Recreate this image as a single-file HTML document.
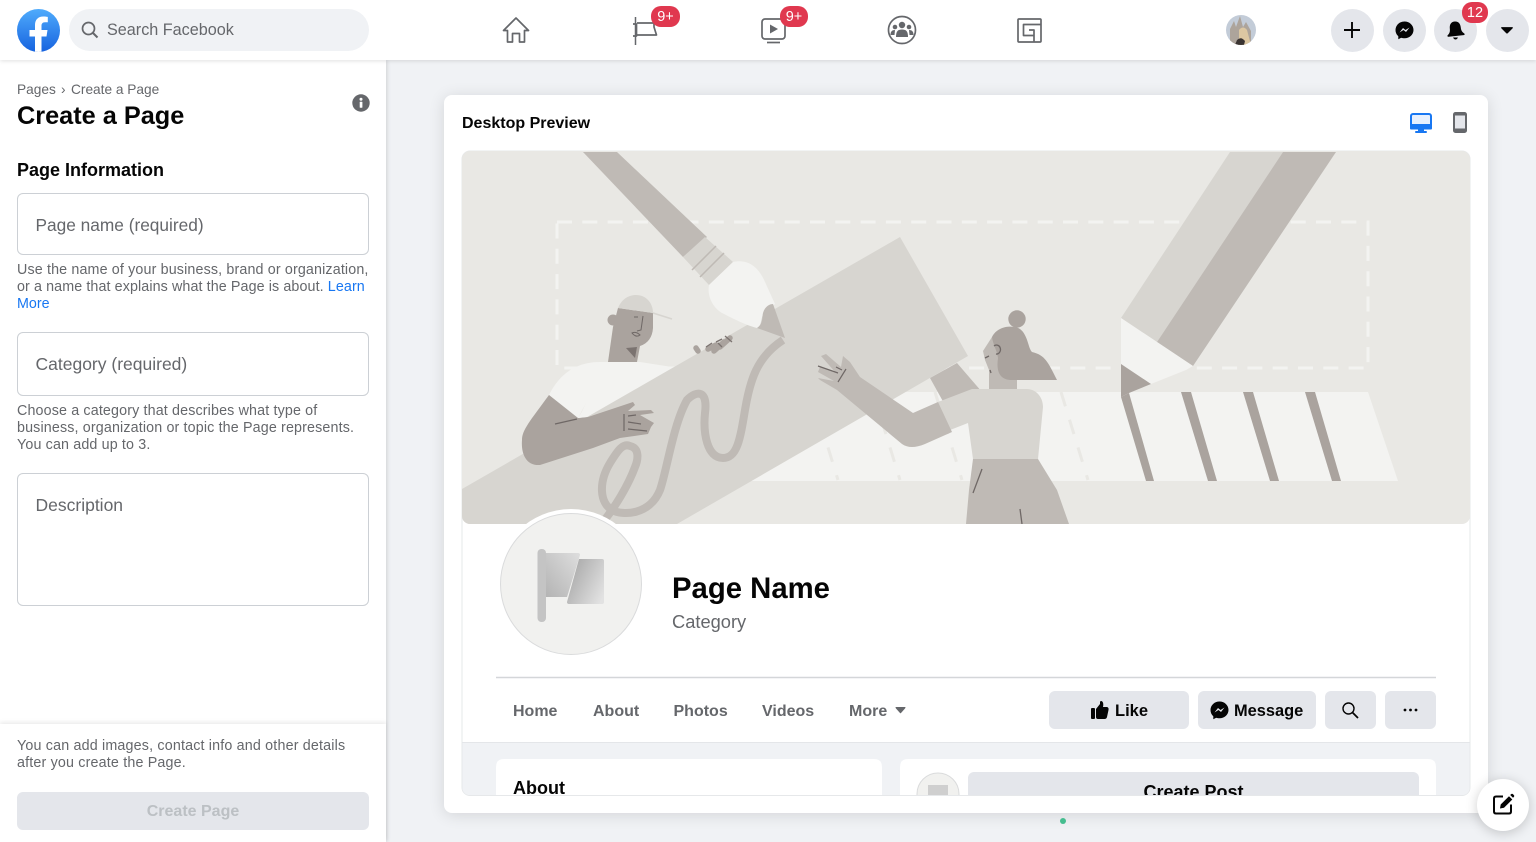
<!DOCTYPE html>
<html lang="en"><head><meta charset="utf-8"><title>Create a Page</title>
<style>
*{box-sizing:border-box}
html,body{margin:0;padding:0;width:1536px;height:842px;overflow:hidden;background:#f0f2f5;font-family:"Liberation Sans",sans-serif}
.a{position:absolute}
.t{position:absolute;white-space:nowrap;line-height:20px;height:20px}
.g{color:#65676b}
.b{font-weight:bold}
.k{color:#050505}
.input{position:absolute;left:17px;width:352px;background:#fff;border:1px solid #ccd0d5;border-radius:6px}
.circ{position:absolute;top:8.5px;width:43px;height:43px;border-radius:50%;background:#e4e6eb}
.badge{position:absolute;background:#e0384f;color:#fff;text-align:center;font-size:14.5px;line-height:22px;height:21px;border-radius:10px}
.btn{position:absolute;top:691px;height:38px;background:#e4e6eb;border-radius:6px}
svg{position:absolute;overflow:visible}
</style></head><body>

<!-- main card -->
<div class="a" style="left:444px;top:95px;width:1044px;height:718px;background:#fff;border-radius:8px;box-shadow:0 2px 16px rgba(0,0,0,.12)"></div>
<div class="t b k" style="left:462px;top:113.500px;font-size:16px">Desktop Preview</div>

<svg style="left:0;top:0" width="1536" height="842" viewBox="0 0 1536 842">
  <!-- device icons -->
  <rect x="1411" y="114" width="20" height="14.5" rx="2" fill="#e7f0fe" stroke="#1877f2" stroke-width="2"/>
  <rect x="1410" y="124" width="22" height="5.5" rx="1" fill="#1877f2"/>
  <rect x="1418" y="129" width="6" height="2.5" fill="#1877f2"/><rect x="1415" y="131" width="12" height="2" rx="1" fill="#1877f2"/>
  <rect x="1453" y="112" width="14" height="21" rx="2.5" fill="#65676b"/>
  <rect x="1455" y="115.500" width="10" height="13" fill="#e4e6eb"/>

  <!-- preview inner -->
  <rect x="462" y="151" width="1008" height="644.500" rx="8" fill="#fff" stroke="#e6e8ea" stroke-width="1"/>
  <rect x="462.500" y="743" width="1007" height="52" rx="7" fill="#f0f2f5"/>
  <rect x="462.500" y="743" width="1007" height="20" fill="#f0f2f5"/>
  <line x1="462" y1="742.500" x2="1470" y2="742.500" stroke="#e4e6e9"/>

  <!-- Banner -->
  <clipPath id="bc"><rect x="462" y="151" width="1008" height="373" rx="8"/></clipPath>
  <g clip-path="url(#bc)">
    <rect x="462" y="151" width="1008" height="373" fill="#e9e8e4"/>
    <rect x="557" y="222" width="811" height="146" fill="none" stroke="#f3f3f1" stroke-width="3" stroke-dasharray="15 10.300"/>
    <polygon points="860,392 1368,392 1398,481 700,481" fill="#f3f3f1"/>
    <g stroke="#e9e8e4" stroke-width="3" stroke-dasharray="15 14" fill="none">
      <line x1="811" y1="392" x2="838" y2="480"/><line x1="873" y1="392" x2="900" y2="480"/>
      <line x1="935" y1="392" x2="962" y2="480"/><line x1="1061" y1="392" x2="1088" y2="480"/>
    </g>
    <!-- pencil -->
    <polygon points="1230,152 1283,152 1157,342 1121,318" fill="#d7d5d0"/>
    <polygon points="1283,152 1336,152 1193,366 1157,342" fill="#bfbab5"/>
    <polygon points="1121,318 1193,366 1186,370 1151,384 1121,364" fill="#f3f3f1"/>
    <polygon points="1121,364 1151,384 1129,393 1121,397" fill="#aaa39e"/>
    <polygon points="1121,397 1129,393 1154,481 1146,481" fill="#aaa39e"/>
    <polygon points="1181,392 1191,392 1217,481 1208,481" fill="#aaa39e"/>
    <polygon points="1243,392 1253,392 1279,481 1270,481" fill="#aaa39e"/>
    <polygon points="1305,392 1315,392 1341,481 1332,481" fill="#aaa39e"/>
    <!-- brush -->
    <polygon points="583,152 617,152 707,237 683,257" fill="#bfbab5"/>
    <polygon points="705,237 733,262 709,285 683,257" fill="#d7d5d0"/>
    <path d="M692,270L716,246M700,277L724,253" stroke="#bfbab5" stroke-width="1.500"/>
    <!-- man head -->
    <circle cx="613" cy="320" r="5.500" fill="#aaa39e"/>
    <path d="M618,308L653,313V328Q652,342 640,346L637,362H608L613,327Z" fill="#aaa39e"/>
    <path d="M618,308C622,298 630,295 636,295C646,295 653,303 653,313Z" fill="#d7d5d0"/>
    <line x1="653" y1="313" x2="672" y2="319" stroke="#d7d5d0" stroke-width="1.500"/>
    <path d="M626,348L637,347L635,358Z" fill="#7b7370"/>
    <path d="M634,317L638,317M643,316L641,330L637,331M632,333Q636,338 640,335Q636,331 632,333Z" stroke="#6f6866" stroke-width="1" fill="none"/>
    <path d="M549,395C560,373 577,362 600,362H640L672,367L640,400L578,420L586,403L578,418Z" fill="#f3f3f1"/>
    <!-- other arm behind -->
    <polygon points="930,378 957,363 982,392 945,405" fill="#bfbab5"/>
    <!-- canvas -->
    <polygon points="462,489 900,237 968,356 677,524 462,524" fill="#d7d5d0"/>
    <!-- upper hand -->
    <g stroke="#aaa39e" stroke-width="5.500" stroke-linecap="round" fill="none">
      <path d="M696,348L698,351"/>
      <path d="M708,349L716,345M714,351L724,342M720,347L730,338"/>
    </g>
    <path d="M706,347L712,343M716,342L722,339M725,336L732,342M718,343L722,347" stroke="#7b7370" stroke-width="1.300" fill="none"/>
    <!-- bristles -->
    <path d="M733,262C750,258 760,270 765,282L775,304L763,313L760,326L757,328C745,325 730,317 722,313C712,307 707,295 709,285Z" fill="#f3f3f1"/>
    <path d="M773,304L785,338L757,328C763,324 762,318 763,313C765,306 770,304 773,304Z" fill="#bfbab5"/>
    <!-- squiggle -->
    <path d="M783,340C757,357 750,380 745,410C740,440 737,458 723,458C707,458 703,433 705,413C708,390 697,390 687,400C673,425 667,470 660,490C650,515 623,516 612,510C600,503 598,483 610,463C618,450 623,443 630,446C640,448 638,460 635,467C628,486 615,507 603,522" fill="none" stroke="#bfbab5" stroke-width="8" stroke-linejoin="round"/>
    <!-- man arm -->
    <path d="M549,395L578,418L588,417L633,402L635,405L628,411L651,410L654,413L640,415L654,423L651,427L648,434L620,438L593,448L540,465C525,466 521,452 522,440C522,430 530,421 549,395Z" fill="#aaa39e"/>
    <path d="M555,424L577,419" stroke="#6f6866" stroke-width="1.300"/>
    <path d="M624,414V431M628,416L636,415M628,422L641,424M628,429L647,431" stroke="#6f6866" stroke-width="1.200" fill="none"/>
    <polygon points="578,418 587,404 586,417" fill="#f3f3f1"/>
    <!-- woman -->
    <circle cx="1017" cy="319" r="8.700" fill="#aaa39e"/>
    <rect x="989" y="368" width="28" height="24" fill="#bfbab5"/>
    <path d="M992,337L983,351L985,360L989,370L1000,380L1010,378L1010,340Z" fill="#bfbab5"/>
    <path d="M992,337C998,325 1014,325 1020,329C1028,335 1028,348 1032,352C1045,355 1048,362 1057,380H1012C1000,380 996,372 998,358C997,350 993,345 992,337Z" fill="#aaa39e"/>
    <path d="M994,346A4,4.500 0 1 1 996,354" fill="none" stroke="#6f6866" stroke-width="1.300"/>
    <path d="M985,358L989,356M990,370L991,373" stroke="#6f6866" stroke-width="1.300"/>
    <path d="M945,432L968,423L973,459H1038L1043,407C1043,396 1035,389 1027,389H972L938,402Z" fill="#d7d5d0"/>
    <path d="M973,459H1038L1057,490L1069,524H966L969,490Z" fill="#bfbab5"/>
    <path d="M982,469L973,493M1020,509L1022,524" stroke="#6f6866" stroke-width="1.300"/>
    <!-- woman arm -->
    <path d="M860,377L913,413L938,402L952,432L925,444C915,448 908,448 902,444L837,390L820,380L818,378L834,381L818,372L820,367L836,373L821,356L826,354L841,367L843,356L850,362Z" fill="#bfbab5"/>
    <path d="M818,366L838,373M836,367L842,370M846,369L838,382" stroke="#6f6866" stroke-width="1.200" fill="none"/>
  </g>

  <!-- Profile -->
  <circle cx="571" cy="584" r="75" fill="#fff"/>
  <circle cx="571" cy="584" r="70.500" fill="#f1f1ef" stroke="#dadbdc"/>
  <defs>
    <linearGradient id="f1" x1="0" y1="1" x2="1" y2="0"><stop offset="0" stop-color="#b4b4b4"/><stop offset="1" stop-color="#dedede"/></linearGradient>
    <linearGradient id="f2" x1="0" y1=".2" x2="1" y2=".8"><stop offset="0" stop-color="#a6a6a6"/><stop offset="1" stop-color="#e2e2e2"/></linearGradient>
    <linearGradient id="fb" x1="0" y1="0" x2="0" y2="1"><stop offset="0" stop-color="#4fabfc"/><stop offset="1" stop-color="#1763df"/></linearGradient>
  </defs>
  <rect x="537.500" y="549" width="8.500" height="73" rx="4" fill="#c4c4c4"/>
  <path d="M546,553H578Q580,553 580,555L567,597H546Z" fill="url(#f1)"/>
  <path d="M579,559H602Q604,559 604,561V602Q604,604 602,604H569Q567,604 567,602Z" fill="url(#f2)"/>
  <line x1="496" y1="677.500" x2="1436" y2="677.500" stroke="#d4d6d9" stroke-width="1.500"/>

  <!-- Lower cards -->
  <path d="M496,795V767Q496,759 504,759H874Q882,759 882,767V795Z" fill="#fff"/>
  <path d="M900,795V767Q900,759 908,759H1428Q1436,759 1436,767V795Z" fill="#fff"/>
  <clipPath id="lc"><rect x="900" y="759" width="536" height="36"/></clipPath>
  <g clip-path="url(#lc)">
    <circle cx="938" cy="794" r="21" fill="#f1f1ef" stroke="#dadbdc"/>
    <rect x="928" y="785" width="20" height="14" fill="#cfcfcf"/>
    <rect x="968" y="772" width="451" height="40" rx="6" fill="#e4e6eb"/>
  </g>
</svg>

<div class="t b k" style="left:672px;top:578.500px;font-size:29.300px">Page Name</div>
<div class="t g" style="left:672px;top:612px;font-size:18.300px">Category</div>
<div class="t b g" style="left:513px;top:701.500px;font-size:16px">Home</div>
<div class="t b g" style="left:593px;top:701.500px;font-size:16px">About</div>
<div class="t b g" style="left:673.500px;top:701.500px;font-size:16px">Photos</div>
<div class="t b g" style="left:762px;top:701.500px;font-size:16px">Videos</div>
<div class="t b g" style="left:849px;top:701.500px;font-size:16px">More</div>
<svg style="left:895px;top:707px" width="11" height="7"><path d="M1,0H10Q11,0 10,1.500L6,6Q5.500,6.500 5,6L1,1.500Q0,0 1,0Z" fill="#65676b"/></svg>

<div class="btn" style="left:1049px;width:140px"></div>
<div class="btn" style="left:1198px;width:118px"></div>
<div class="btn" style="left:1325px;width:51px"></div>
<div class="btn" style="left:1385px;width:51px"></div>
<div class="t b k" style="left:1115px;top:701px;font-size:16.500px">Like</div>
<div class="t b k" style="left:1234px;top:701px;font-size:16.400px">Message</div>
<svg style="left:1090px;top:701px" width="20" height="18" viewBox="0 0 20 18"><rect x="1" y="7" width="4" height="11" rx="1" fill="#050505"/><path d="M6,8L10,3V1Q10,0 11.500,0Q14,1 13,6H17Q19,6.500 18.500,9L17,16Q16.500,18 14.500,18H8Q6,18 6,16Z" fill="#050505"/></svg>
<svg style="left:1210px;top:701px" width="19" height="19" viewBox="0 0 19 19"><path d="M9.500,0.500C4.500,.5 .5,4.200 .5,9C.5,11.500 1.500,13.700 3.300,15.200V18.300L6.200,16.700C7.200,17 8.300,17.300 9.500,17.300C14.500,17.300 18.500,13.600 18.500,9C18.500,4.200 14.500,.5 9.500,.5Z" fill="#050505"/><path d="M4.500,11.500L8,7L10.500,9L14.500,6.500L11,11L8.500,9Z" fill="#e4e6eb"/></svg>
<svg style="left:1342px;top:702px" width="17" height="16" viewBox="0 0 17 16" fill="none" stroke="#050505" stroke-width="1.400"><circle cx="6.500" cy="6.500" r="5.500"/><path d="M10.500,10.500L16,16" stroke-width="1.800"/></svg>
<svg style="left:1402px;top:707px" width="18" height="6"><circle cx="3" cy="3" r="1.400" fill="#050505"/><circle cx="8.500" cy="3" r="1.400" fill="#050505"/><circle cx="14" cy="3" r="1.400" fill="#050505"/></svg>

<div class="a" style="left:513px;top:776px;height:19px;width:200px;overflow:hidden"><div class="b k" style="font-size:18px;line-height:24px">About</div></div>
<div class="a" style="left:968px;top:780px;height:15px;width:451px;overflow:hidden;text-align:center"><div class="b k" style="font-size:18px;line-height:24px">Create Post</div></div>

<div class="a" style="left:1060px;top:818px;width:6px;height:6px;border-radius:50%;background:#45bd8f"></div>

<!-- Left panel -->
<div class="a" style="left:0;top:60px;width:386px;height:782px;background:#fff;box-shadow:1px 0 4px rgba(0,0,0,.14)"></div>
<div class="t g" style="left:17px;top:79.500px;font-size:13.700px">Pages</div>
<div class="t g" style="left:61px;top:79.500px;font-size:13.700px">›</div>
<div class="t g" style="left:71px;top:79.500px;font-size:13.700px">Create a Page</div>
<div class="t b k" style="left:17px;top:105.500px;font-size:25.300px">Create a Page</div>
<svg style="left:352px;top:94px" width="18" height="18"><circle cx="9" cy="9" r="8.700" fill="#65676b"/><circle cx="9" cy="5.300" r="1.500" fill="#fff"/><rect x="7.700" y="7.800" width="2.700" height="6" rx=".5" fill="#fff"/></svg>
<div class="t b k" style="left:17px;top:160px;font-size:18px">Page Information</div>

<div class="input" style="top:193px;height:62px"></div>
<div class="t g" style="left:35.500px;top:215px;font-size:17.300px">Page name (required)</div>
<div class="t g" style="left:17px;top:259.500px;font-size:14.300px;letter-spacing:.14px">Use the name of your business, brand or organization,</div>
<div class="t g" style="left:17px;top:276.500px;font-size:14.300px;letter-spacing:.1px">or a name that explains what the Page is about. <span style="color:#1877f2">Learn</span></div>
<div class="t" style="left:17px;top:293.500px;font-size:14.300px;color:#1877f2">More</div>

<div class="input" style="top:332px;height:64px"></div>
<div class="t g" style="left:35.500px;top:353.500px;font-size:17.500px">Category (required)</div>
<div class="t g" style="left:17px;top:400.500px;font-size:14.300px;letter-spacing:.14px">Choose a category that describes what type of</div>
<div class="t g" style="left:17px;top:417.500px;font-size:14.300px;letter-spacing:.14px">business, organization or topic the Page represents.</div>
<div class="t g" style="left:17px;top:434.500px;font-size:14.300px;letter-spacing:.14px">You can add up to 3.</div>

<div class="input" style="top:473px;height:133px"></div>
<div class="t g" style="left:35.500px;top:494.500px;font-size:17.500px">Description</div>

<div class="a" style="left:0;top:724px;width:386px;height:118px;background:#fff;box-shadow:0 -2px 4px rgba(0,0,0,.08)"></div>
<div class="t g" style="left:17px;top:736px;font-size:14.300px;letter-spacing:.17px">You can add images, contact info and other details</div>
<div class="t g" style="left:17px;top:753px;font-size:14.300px;letter-spacing:.17px">after you create the Page.</div>
<div class="a b" style="left:17px;top:792px;width:352px;height:38px;background:#e4e6eb;border-radius:6px;color:#bcc0c4;font-size:16px;line-height:40px;text-align:center">Create Page</div>

<!-- Top bar -->
<div class="a" style="left:0;top:0;width:1536px;height:60px;background:#fff;box-shadow:0 1px 4px rgba(0,0,0,.12)"></div>
<svg style="left:17px;top:9px" width="43" height="43" viewBox="0 0 43 43">
  <clipPath id="lg"><circle cx="21.500" cy="21.500" r="21.500"/></clipPath>
  <circle cx="21.500" cy="21.500" r="21.500" fill="url(#fb)"/>
  <path clip-path="url(#lg)" d="M18,43V27.500H12.500V21H18V16C18,10.500 21.300,7.500 26.300,7.500C28.700,7.500 30.800,7.900 30.800,7.900V13.300H28C25.300,13.300 24.500,15 24.500,16.700V21H30.500L29.500,27.500H24.500V43Z" fill="#fff"/>
</svg>
<div class="a" style="left:69px;top:9px;width:300px;height:42px;border-radius:21px;background:#f0f2f5"></div>
<svg style="left:81px;top:21px" width="18" height="18" fill="none" stroke="#65676b"><circle cx="7.500" cy="7.500" r="6" stroke-width="1.700"/><path d="M12,12L16.500,16.500" stroke-width="2"/></svg>
<div class="t g" style="left:107px;top:20px;font-size:16.200px">Search Facebook</div>

<svg style="left:0;top:0" width="1536" height="60" viewBox="0 0 1536 60" fill="none" stroke="#65676b" stroke-width="1.700" stroke-linejoin="round">
  <!-- home -->
  <path d="M503.500,30.500L516,18L528.500,30.500H524.500V42H519.500V33.500H512.500V42H507.500V30.500Z"/>
  <!-- flag -->
  <path d="M635.500,17V45" stroke-width="1.500"/>
  <path d="M633,24H636.500V36H633"/>
  <path d="M637,23H654L654,27L656.500,35H637"/>
  <!-- video -->
  <rect x="762" y="19" width="23" height="20" rx="3"/>
  <path d="M770,24.500L778,29L770,33.500Z" fill="#65676b" stroke="none"/>
  <path d="M767,42.500H780" stroke-width="1.700"/>
  <!-- groups -->
  <circle cx="902" cy="30" r="13.500"/>
  <g fill="#65676b" stroke="none">
    <circle cx="902" cy="25" r="3.200"/><circle cx="895" cy="27" r="2.300"/><circle cx="909" cy="27" r="2.300"/>
    <path d="M896,37C896,31 898,29.500 902,29.500C906,29.500 908,31 908,37Z"/>
    <path d="M890.500,35C890.500,31.500 892,30 895,30L894.500,35Z"/>
    <path d="M913.500,35C913.500,31.500 912,30 909,30L909.500,35Z"/>
  </g>
  <!-- gaming square -->
  <rect x="1018" y="19" width="23" height="23" rx="1"/>
  <path d="M1041,24.500H1023.500V35.500H1034V42M1029,30H1034V35.500"/>
</svg>

<div class="badge" style="left:651px;top:6px;width:29px">9+</div>
<div class="badge" style="left:780px;top:6px;width:28px">9+</div>

<!-- avatar -->
<svg style="left:1226px;top:15px" width="30" height="30" viewBox="0 0 30 30">
  <clipPath id="av"><circle cx="15" cy="15" r="15"/></clipPath>
  <g clip-path="url(#av)">
    <rect width="30" height="30" fill="#c3ccd8"/>
    <path d="M4,30V14L8,6L10,12L14,1L17,12L20,7L25,16V30Z" fill="#ada49b"/>
    <path d="M13,30V15Q17,10 21,15L25,30Z" fill="#dcc7a2"/>
    <path d="M11,25Q15,21 19,26L18,30H9Z" fill="#3a3432"/>
  </g>
</svg>

<div class="circ" style="left:1331px"></div>
<div class="circ" style="left:1382.500px"></div>
<div class="circ" style="left:1434px"></div>
<div class="circ" style="left:1485.500px"></div>
<svg style="left:1344px;top:22px" width="16" height="16"><path d="M8,0V16M0,8H16" stroke="#050505" stroke-width="1.900"/></svg>
<svg style="left:1395px;top:21px" width="19" height="19" viewBox="0 0 19 19"><path d="M9.500,0.500C4.500,.5 .5,4.200 .5,9C.5,11.500 1.500,13.700 3.300,15.200V18.300L6.200,16.700C7.200,17 8.300,17.300 9.500,17.300C14.500,17.300 18.500,13.600 18.500,9C18.500,4.200 14.500,.5 9.500,.5Z" fill="#050505"/><path d="M4.500,11.500L8,7L10.500,9L14.500,6.500L11,11L8.500,9Z" fill="#e4e6eb"/></svg>
<svg style="left:1446px;top:21px" width="19" height="19" viewBox="0 0 19 19"><path d="M9.500,0.500C5.500,.5 4,3.500 4,7C4,10.500 3,12 1,13.500Q.5,15 2,15H17Q18.500,15 18,13.500C16,12 15,10.500 15,7C15,3.500 13.500,.5 9.500,.5Z" fill="#050505" transform="rotate(-6 9.500 9)"/><path d="M7,16.500H12Q11,18.500 9.500,18.500Q8,18.500 7,16.500Z" fill="#050505"/></svg>
<svg style="left:1501px;top:27px" width="12" height="7" viewBox="0 0 14 8"><path d="M1,0H13Q14.500,0 13.500,1.500L8,7Q7,8 6,7L.5,1.500Q-.5,0 1,0Z" fill="#050505"/></svg>
<div class="badge" style="left:1462px;top:2px;width:26px;font-size:14.500px">12</div>

<!-- compose FAB -->
<div class="a" style="left:1477px;top:778.500px;width:52px;height:52px;border-radius:50%;background:#fff;box-shadow:0 2px 12px rgba(0,0,0,.2)"></div>
<svg style="left:1492px;top:793px" width="23" height="23" viewBox="0 0 23 23" fill="none"><path d="M11,3.500H4Q2,3.500 2,5.500V18.500Q2,20.500 4,20.500H17Q19,20.500 19,18.500V11.500" stroke="#050505" stroke-width="2"/><path d="M8,15.500L8.700,11.500L17,3.200L20.300,6.500L12,14.800Z" fill="#050505"/><path d="M18.200,2L19.300,1Q20,.5 20.800,1L22,2.200Q22.500,3 22,3.700L21,4.800Z" fill="#050505"/></svg>

</body></html>
